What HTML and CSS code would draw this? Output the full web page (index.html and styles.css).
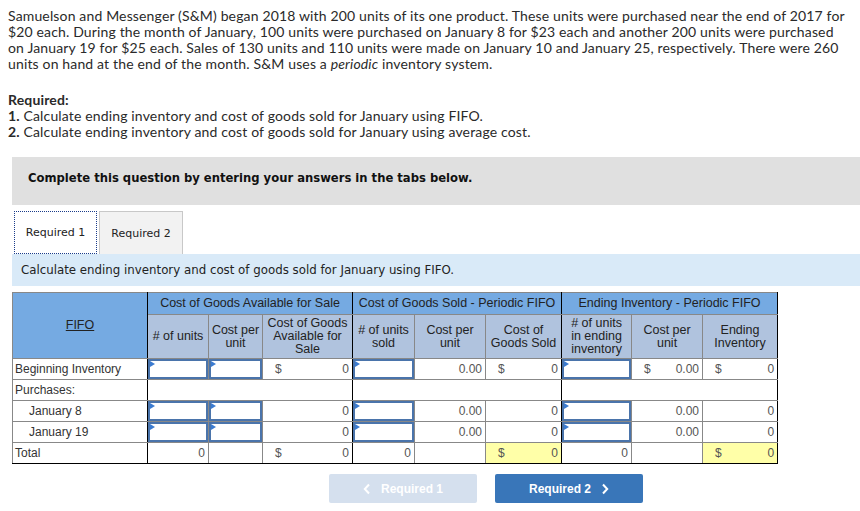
FILE: index.html
```html
<!DOCTYPE html>
<html>
<head>
<meta charset="utf-8">
<link rel="stylesheet" href="styles.css">
</head>
<body>
<div class="page">
  <p class="intro">Samuelson and Messenger (S&amp;M) began 2018 with 200 units of its one product. These units were purchased near the end of 2017 for<br>$20 each. During the month of January, 100 units were purchased on January 8 for $23 each and another 200 units were purchased<br>on January 19 for $25 each. Sales of 130 units and 110 units were made on January 10 and January 25, respectively. There were 260<br>units on hand at the end of the month. S&amp;M uses a <i>periodic</i> inventory system.</p>
  <div class="required">
    <b>Required:</b><br>
    <b>1.</b> Calculate ending inventory and cost of goods sold for January using FIFO.<br>
    <b>2.</b> Calculate ending inventory and cost of goods sold for January using average cost.
  </div>
</div>

<div class="question">
  <div class="banner">Complete this question by entering your answers in the tabs below.</div>
  <div class="tabs">
    <div class="tab active">Required 1</div>
    <div class="tab">Required 2</div>
  </div>
  <div class="instruction">Calculate ending inventory and cost of goods sold for January using FIFO.</div>

  <table class="grid">
    <colgroup>
      <col style="width:135px"><col style="width:61px"><col style="width:54px"><col style="width:90px">
      <col style="width:62px"><col style="width:71px"><col style="width:76px">
      <col style="width:70px"><col style="width:71px"><col style="width:75px">
    </colgroup>
    <thead>
      <tr class="h1">
        <th rowspan="2" class="fifo g"><u>FIFO</u></th>
        <th colspan="3" class="g">Cost of Goods Available for Sale</th>
        <th colspan="3" class="g">Cost of Goods Sold - Periodic FIFO</th>
        <th colspan="3" class="g">Ending Inventory - Periodic FIFO</th>
      </tr>
      <tr class="h2">
        <th># of units</th>
        <th>Cost per unit</th>
        <th class="g">Cost of Goods Available for Sale</th>
        <th># of units sold</th>
        <th class="wide">Cost per unit</th>
        <th class="g">Cost of Goods Sold</th>
        <th class="mid"># of units in ending inventory</th>
        <th class="wide">Cost per unit</th>
        <th class="g">Ending Inventory</th>
      </tr>
    </thead>
    <tbody>
      <tr>
        <td class="label g">Beginning Inventory</td>
        <td class="in"><div class="box"></div></td>
        <td class="in"><div class="box"></div></td>
        <td class="num g"><span class="cur">$</span><span>0</span></td>
        <td class="in"><div class="box"></div></td>
        <td class="num">0.00</td>
        <td class="num g"><span class="cur">$</span><span>0</span></td>
        <td class="in"><div class="box"></div></td>
        <td class="num"><span class="cur">$</span><span>0.00</span></td>
        <td class="num g"><span class="cur">$</span><span>0</span></td>
      </tr>
      <tr>
        <td class="label g">Purchases:</td>
        <td colspan="3" class="g"></td>
        <td colspan="3" class="g"></td>
        <td colspan="3" class="g"></td>
      </tr>
      <tr>
        <td class="label sub g">January 8</td>
        <td class="in"><div class="box"></div></td>
        <td class="in"><div class="box"></div></td>
        <td class="num g">0</td>
        <td class="in"><div class="box"></div></td>
        <td class="num">0.00</td>
        <td class="num g">0</td>
        <td class="in"><div class="box"></div></td>
        <td class="num">0.00</td>
        <td class="num g">0</td>
      </tr>
      <tr>
        <td class="label sub g">January 19</td>
        <td class="in"><div class="box"></div></td>
        <td class="in"><div class="box"></div></td>
        <td class="num g">0</td>
        <td class="in"><div class="box"></div></td>
        <td class="num">0.00</td>
        <td class="num g">0</td>
        <td class="in"><div class="box"></div></td>
        <td class="num">0.00</td>
        <td class="num g">0</td>
      </tr>
      <tr class="total">
        <td class="label g">Total</td>
        <td class="num">0</td>
        <td class="num"></td>
        <td class="num g"><span class="cur">$</span><span>0</span></td>
        <td class="num">0</td>
        <td class="num"></td>
        <td class="num g hl"><span class="cur">$</span><span>0</span></td>
        <td class="num">0</td>
        <td class="num"></td>
        <td class="num g hl"><span class="cur">$</span><span>0</span></td>
      </tr>
    </tbody>
  </table>

  <div class="nav">
    <div class="btn disabled">
      <svg width="8" height="12" viewBox="0 0 8 12"><polyline points="6,1.5 1.8,6 6,10.5" fill="none" stroke="#fff" stroke-width="2"/></svg>
      <span>Required 1</span>
    </div>
    <div class="btn primary">
      <span>Required 2</span>
      <svg width="8" height="12" viewBox="0 0 8 12"><polyline points="2,1.5 6.2,6 2,10.5" fill="none" stroke="#fff" stroke-width="2"/></svg>
    </div>
  </div>
</div>
</body>
</html>
```
FILE: styles.css
```css
html, body {
  margin: 0;
  padding: 0;
  background: #fff;
}
.page {
  padding: 8px 0 0 8px;
  font-family: "Lato", "Open Sans", sans-serif;
  font-size: 14px;
  line-height: 16px;
  letter-spacing: 0.15px;
  color: #2a2a2a;
}
.intro {
  margin: 0;
  white-space: nowrap;
}
.required {
  margin-top: 20px;
  white-space: nowrap;
}
.question {
  margin: 17px 0 0 12px;
}
.banner {
  background: #e0e0e0;
  height: 48px;
  box-sizing: border-box;
  padding: 0 0 7px 16px;
  display: flex;
  align-items: center;
  font-family: "DejaVu Sans", Verdana, sans-serif;
  font-weight: bold;
  font-size: 11.6px;
  color: #111;
}
.tabs {
  display: flex;
  margin-top: 6px;
  padding-left: 2px;
  gap: 2px;
}
.tab {
  height: 43px;
  box-sizing: border-box;
  display: flex;
  align-items: center;
  justify-content: center;
  font-family: "DejaVu Sans", Verdana, sans-serif;
  font-size: 11px;
  color: #222;
  border: 1px solid #c8c8c8;
  border-bottom: none;
  background: #f2f2f2;
  width: 84px;
}
.tab.active {
  background: #fff;
  width: 83px;
  border: 1px dotted #1a3c8a;
}
.instruction {
  background: #d9eaf8;
  height: 32px;
  display: flex;
  align-items: center;
  padding-left: 9px;
  font-family: "DejaVu Sans", Verdana, sans-serif;
  font-size: 11.8px;
  color: #222;
}
.grid {
  margin-top: 6px;
  border-collapse: collapse;
  table-layout: fixed;
  width: 765px;
  font-family: "Liberation Sans", Arial, sans-serif;
  font-size: 12px;
}
.grid th, .grid td {
  border: 1px solid #888;
  padding: 0;
}
.grid th {
  font-weight: normal;
  font-size: 12.5px;
  color: #222;
  line-height: 13px;
}
.grid .h1 th {
  background: #75aae2;
  height: 21px;
}
.grid .h2 th {
  background: #b0c3de;
  height: 43px;
  padding: 0 1px;
}
.grid .h2 th.wide {
  padding: 0 10px;
}
.grid .h2 th.mid {
  padding: 0 5px;
}
.grid th.fifo {
  background: #75aae2;
  vertical-align: middle;
}
.grid th.fifo u {
  text-decoration: underline;
}
.grid .g {
  border-right: 1px solid #000;
}
.grid tbody tr {
  height: 21px;
}
.grid tbody td {
  color: #555;
  height: 20px;
}
.grid tbody tr:first-child td {
  border-top: 1px solid #000;
}
.grid tbody tr.total td {
  border-bottom: 1px solid #000;
}
.grid td.label {
  padding-left: 2px;
  color: #333;
  white-space: nowrap;
}
.grid td.label.sub {
  padding-left: 16px;
}
.grid td.num {
  text-align: right;
  padding: 0 3px 0 12px;
}
.grid td.num span {
  display: inline-block;
}
.grid td.num .cur {
  float: left;
}
.grid td.hl {
  background: #ffffa8;
}
.grid td.in {
  padding: 0;
}
.box {
  height: 20px;
  box-sizing: border-box;
  border: 2px solid #4a74ab;
  position: relative;
}
.box::before {
  content: "";
  position: absolute;
  left: 0;
  top: 0;
  border-left: 5px solid #3b7bd0;
  border-top: 3px solid transparent;
  border-bottom: 3px solid transparent;
}
.nav {
  display: flex;
  gap: 18px;
  padding-left: 317px;
  margin-top: 10px;
}
.btn {
  width: 148px;
  height: 29px;
  border-radius: 2px;
  display: flex;
  align-items: center;
  justify-content: center;
  gap: 10px;
  font-family: "Liberation Sans", Arial, sans-serif;
  font-weight: bold;
  font-size: 12px;
  color: #fff;
}
.btn.disabled {
  background: #d5e0ee;
}
.btn.primary {
  background: #3976b9;
}
```
